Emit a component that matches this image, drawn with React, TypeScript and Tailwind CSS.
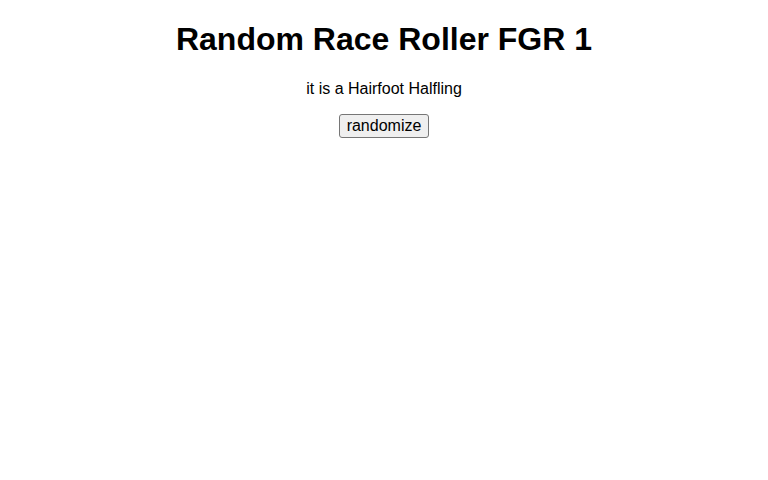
import { useState } from "react"

const RACES = [
  "Hairfoot Halfling",
  "Hill Dwarf",
  "High Elf",
  "Mountain Dwarf",
  "Wood Elf",
  "Stout Halfling",
]

export default function App() {
  const [race, setRace] = useState(RACES[0])

  const roll = () => {
    setRace(RACES[Math.floor(Math.random() * RACES.length)])
  }

  return (
    <div className="text-center text-black bg-white font-['Liberation_Sans',Arial,sans-serif]">
      <h1 className="pt-[21px] pb-[22px] text-[32px] leading-[37px] font-bold">
        Random Race Roller FGR 1
      </h1>
      <p className="text-base leading-[18px]">it is a {race}</p>
      <div className="pt-4">
        <button
          onClick={roll}
          className="px-[7px] py-[2px] text-base leading-[18px] bg-[#efefef] border border-[#767676] rounded-[3px] hover:bg-[#e5e5e5]"
        >
          randomize
        </button>
      </div>
    </div>
  )
}
